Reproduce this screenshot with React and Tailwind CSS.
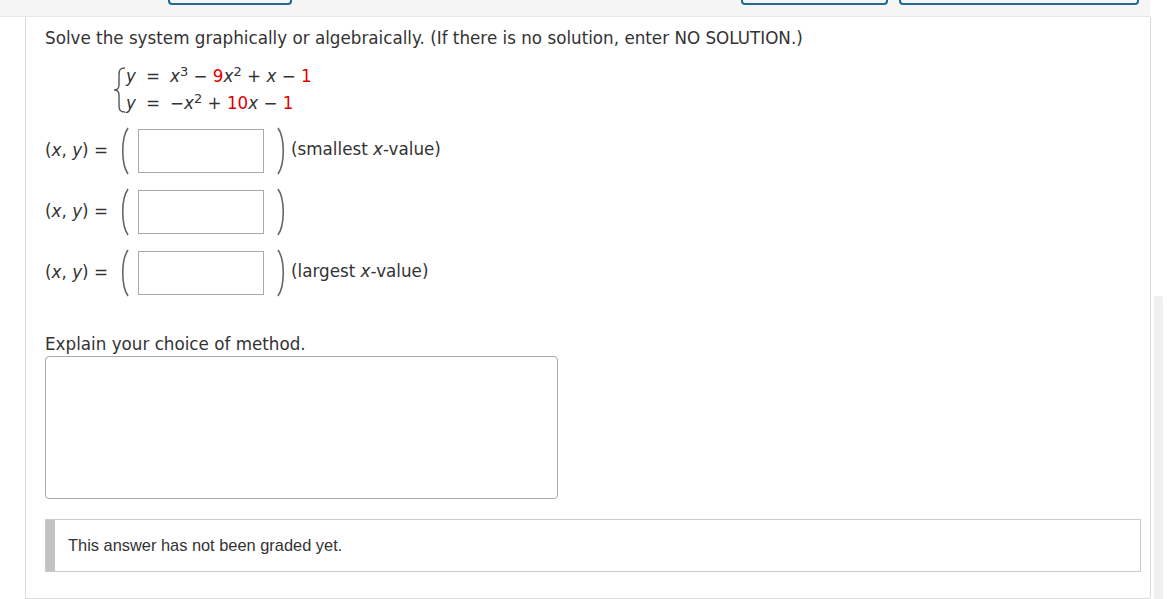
import React from 'react';

const verdana = { fontFamily: '"DejaVu Sans", Verdana, sans-serif' };

function Paren({ side }) {
  // tall thin parenthesis around the answer box
  return (
    <svg width="12" height="50" viewBox="0 0 12 50" className="shrink-0">
      {side === 'left' ? (
        <path d="M8 2 C1 12, 1 38, 8 48" fill="none" stroke="#666" strokeWidth="1.6" />
      ) : (
        <path d="M4 2 C11 12, 11 38, 4 48" fill="none" stroke="#666" strokeWidth="1.6" />
      )}
    </svg>
  );
}

function AnswerRow({ note }) {
  return (
    <div className="flex items-center h-[46px]">
      <span className="w-[75px] text-[16.75px] text-[#333]">
        (<i>x</i>, <i>y</i>) =
      </span>
      <Paren side="left" />
      <div className="w-[126px] h-[44px] border border-[#a9a9a9] bg-white ml-[6px] mr-[10px]" />
      <Paren side="right" />
      {note && (
        <span className="ml-[5px] text-[16.75px] text-[#333] -mt-[2px]">
          {note}
        </span>
      )}
    </div>
  );
}

export default function App() {
  return (
    <div className="w-[1172px] h-[599px] bg-white overflow-hidden relative" style={verdana}>
      {/* top toolbar strip with button bottoms */}
      <div className="h-[17px] bg-[#f5f5f5] border-b border-[#e6e6e6] mr-[22px] relative">
        <div className="absolute left-[168px] top-[-10px] w-[124px] h-[15px] border-2 border-[#1f6a96] rounded-[4px]" />
        <div className="absolute left-[741px] top-[-10px] w-[147px] h-[15px] border-2 border-[#1f6a96] rounded-[4px]" />
        <div className="absolute left-[899px] top-[-10px] w-[240px] h-[15px] border-2 border-[#1f6a96] rounded-[4px]" />
      </div>

      <div className="flex">
        <div className="ml-[25px] w-[1126px] h-[582px] border-l border-r border-b border-[#dcdcdc] rounded-br-[3px] pl-[19px] pt-[10px]">
          <p className="text-[16.75px] text-[#333] leading-[22px]">
            Solve the system graphically or algebraically. (If there is no solution, enter NO SOLUTION.)
          </p>

          {/* system of equations */}
          <div className="flex items-center ml-[67px] mt-[14px]">
            <svg width="15" height="48" viewBox="0 0 15 48" className="shrink-0">
              <path
                d="M13 2 C8 2, 7 4, 7 9 L7 19 C7 22, 5 24, 2 24 C5 24, 7 26, 7 29 L7 39 C7 44, 8 46, 13 46"
                fill="none"
                stroke="#555"
                strokeWidth="1.4"
              />
            </svg>
            <div className="text-[16.75px] text-[#333] leading-[27px] -ml-[1px]">
              <div>
                <i>y</i><span className="mx-[10px]">=</span><i>x</i><sup className="text-[13px]">3</sup> − <span className="text-[#e00000]">9</span><i>x</i><sup className="text-[13px]">2</sup> + <i>x</i> − <span className="text-[#e00000]">1</span>
              </div>
              <div>
                <i>y</i><span className="mx-[10px]">=</span>−<i>x</i><sup className="text-[13px]">2</sup> + <span className="text-[#e00000]">10</span><i>x</i> − <span className="text-[#e00000]">1</span>
              </div>
            </div>
          </div>

          <div className="flex flex-col gap-[15px] mt-[11px]">
            <AnswerRow note={<>(smallest <i>x</i>-value)</>} />
            <AnswerRow />
            <AnswerRow note={<>(largest <i>x</i>-value)</>} />
          </div>

          <p className="text-[16.75px] text-[#333] mt-[37px] leading-[22px]">Explain your choice of method.</p>
          <div className="w-[513px] h-[143px] border border-[#aaaaaa] rounded-[4px] mt-[1px]" />

          <div className="flex w-[1096px] h-[53px] border border-[#cccccc] mt-[20px]">
            <div className="w-[9px] bg-[#c2c2c2]" />
            <div
              className="flex items-center pl-[13px] text-[16.4px] text-[#333]"
              style={{ fontFamily: '"Liberation Sans", Arial, sans-serif' }}
            >
              This answer has not been graded yet.
            </div>
          </div>
        </div>

        {/* scrollbar track */}
        <div className="ml-[3px] mt-[279px] w-[9px] h-[303px] bg-[#f0f0f0] rounded-t-[3px]" />
      </div>
    </div>
  );
}
